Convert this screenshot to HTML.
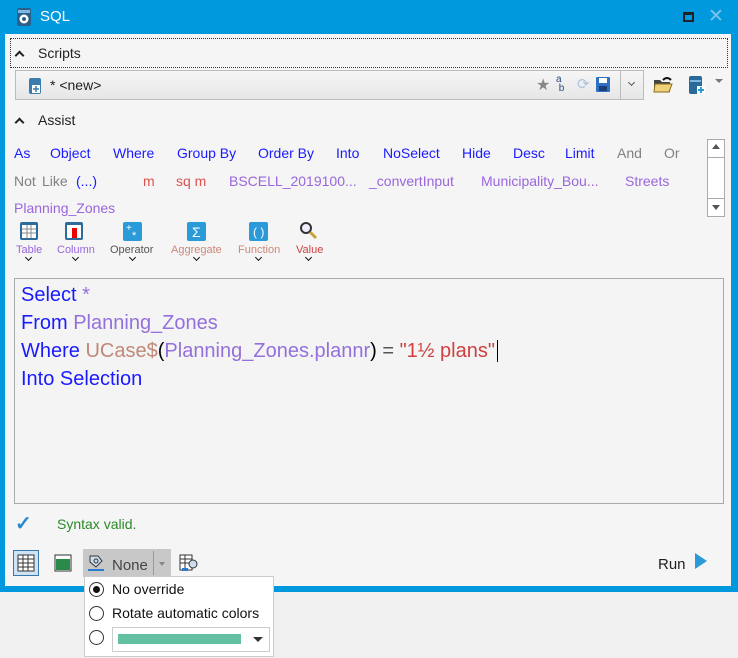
<!DOCTYPE html>
<html><head><meta charset="utf-8"><style>
*{margin:0;padding:0;box-sizing:border-box}
body{width:738px;height:658px;background:#f0f0f0;position:relative;overflow:hidden;font-family:"Liberation Sans",sans-serif;font-size:14px;color:#222}
.a{position:absolute;white-space:nowrap}
.b{color:#1a1aff}.g{color:#808080}.p{color:#9966dd}.r{color:#d9534f}
.lbl{font-size:11px;position:absolute;white-space:nowrap}
.chev{position:absolute;width:6px;height:6px;border-right:1.5px solid #111;border-bottom:1.5px solid #111;transform:rotate(45deg)}
.up{position:absolute;width:7px;height:7px;border-left:2px solid #222;border-top:2px solid #222;transform:rotate(45deg)}
</style></head><body>
<div class="a" style="left:0;top:0;width:738px;height:592px;background:#0099dd"></div>
<div class="a" style="left:5px;top:34px;width:726px;height:552px;background:#f5f5f5"></div>
<svg class="a" style="left:14px;top:7px" width="20" height="20" viewBox="0 0 20 20"><rect x="3" y="1" width="14" height="18" rx="2" fill="#2a5f8a"/><rect x="4" y="3" width="12" height="3" fill="#7fb6df"/><circle cx="10" cy="12" r="4.5" fill="#fff"/><circle cx="10" cy="12" r="2" fill="#2a5f8a"/></svg>
<div class="a" style="left:40px;top:8px;color:#fff;font-size:15px">SQL</div>
<div class="a" style="left:683px;top:12px;width:11px;height:10px;border:2px solid #222;border-top-width:3px"></div>
<div class="a" style="left:708px;top:5px;color:#7cc4ea;font-size:19px">✕</div>
<div class="a" style="left:10px;top:38px;width:718px;height:30px;border:1px dotted #333"></div>
<div class="up" style="left:16px;top:52px"></div>
<div class="a" style="left:38px;top:45px">Scripts</div>
<div class="a" style="left:15px;top:70px;width:629px;height:30px;border:1px solid #bbb;background:linear-gradient(#f6f6f6,#e6e6e6)"></div>
<div class="a" style="left:620px;top:71px;width:1px;height:28px;background:#bbb"></div>
<div class="chev" style="left:629px;top:80px;width:5px;height:5px;border-color:#555"></div>
<svg class="a" style="left:28px;top:78px" width="14" height="16"><rect x="1" y="0" width="12" height="16" rx="2" fill="#3a7cad"/><rect x="4" y="7" width="8" height="8" fill="#fff"/><path d="M8 8v6M5 11h6" stroke="#3a7cad" stroke-width="1.5"/></svg>
<div class="a" style="left:50px;top:77px">* &lt;new&gt;</div>
<div class="a" style="left:536px;top:75px;color:#888;font-size:16px">★</div>
<div class="a" style="left:556px;top:75px;font-size:10px;color:#2a4a7a;line-height:9px">a<br>&nbsp;b</div>
<div class="a" style="left:577px;top:75px;color:#aac4e0;font-size:15px">⟳</div>
<svg class="a" style="left:596px;top:77px" width="14" height="15"><rect width="14" height="15" rx="1" fill="#2f6fc4"/><rect x="3" y="1" width="8" height="5" fill="#fff"/><rect x="3" y="9" width="8" height="5" fill="#1b3f75"/></svg>
<svg class="a" style="left:653px;top:74px" width="20" height="20"><path d="M1 6h6l2 2h8v10H1z" fill="#444"/><path d="M2 10h17l-3 8H1z" fill="#f0d27a" stroke="#8a6b1a" stroke-width="1"/><path d="M10 6q4-4 8 0" stroke="#111" stroke-width="2" fill="none"/></svg>
<svg class="a" style="left:688px;top:75px" width="18" height="20"><rect x="1" y="1" width="13" height="18" rx="2" fill="#2a6a9a"/><rect x="2" y="5" width="11" height="2" fill="#7fb6df"/><rect x="9" y="11" width="8" height="8" fill="#fff"/><path d="M13 12v6M10 15h6" stroke="#2a9ad8" stroke-width="2"/></svg>
<div class="a" style="left:715px;top:79px;width:0;height:0;border:4px solid transparent;border-top:4px solid #777"></div>
<div class="up" style="left:16px;top:119px"></div>
<div class="a" style="left:38px;top:112px">Assist</div>
<div class="a b" style="left:14px;top:145px">As</div>
<div class="a b" style="left:50px;top:145px">Object</div>
<div class="a b" style="left:113px;top:145px">Where</div>
<div class="a b" style="left:177px;top:145px">Group By</div>
<div class="a b" style="left:258px;top:145px">Order By</div>
<div class="a b" style="left:336px;top:145px">Into</div>
<div class="a b" style="left:383px;top:145px">NoSelect</div>
<div class="a b" style="left:462px;top:145px">Hide</div>
<div class="a b" style="left:513px;top:145px">Desc</div>
<div class="a b" style="left:565px;top:145px">Limit</div>
<div class="a g" style="left:617px;top:145px">And</div>
<div class="a g" style="left:664px;top:145px">Or</div>
<div class="a g" style="left:14px;top:173px">Not</div>
<div class="a g" style="left:42px;top:173px">Like</div>
<div class="a b" style="left:76px;top:173px">(...)</div>
<div class="a r" style="left:143px;top:173px">m</div>
<div class="a r" style="left:176px;top:173px">sq m</div>
<div class="a p" style="left:229px;top:173px">BSCELL_2019100...</div>
<div class="a p" style="left:369px;top:173px">_convertInput</div>
<div class="a p" style="left:481px;top:173px">Municipality_Bou...</div>
<div class="a p" style="left:625px;top:173px">Streets</div>
<div class="a p" style="left:14px;top:200px">Planning_Zones</div>
<div class="a" style="left:707px;top:139px;width:18px;height:78px;border:1px solid #aaa;background:#fff"></div>
<div class="a" style="left:707px;top:157px;width:18px;height:1px;background:#aaa"></div>
<div class="a" style="left:707px;top:198px;width:18px;height:1px;background:#aaa"></div>
<div class="a" style="left:712px;top:144px;border:4px solid transparent;border-bottom:5px solid #555;border-top:0"></div>
<div class="a" style="left:712px;top:205px;border:4px solid transparent;border-top:5px solid #555;border-bottom:0"></div>
<svg class="a" style="left:20px;top:222px" width="18" height="18"><rect width="18" height="18" rx="2" fill="#2b6c9c"/><rect x="2" y="3" width="14" height="13" fill="#fff"/><path d="M2 7h14M2 11h14M7 3v13M11 3v13" stroke="#888"/></svg>
<div class="lbl p" style="left:16px;top:244px">Table</div>
<svg class="a" style="left:65px;top:222px" width="18" height="18"><rect width="18" height="18" rx="2" fill="#2b6c9c"/><rect x="2" y="3" width="14" height="13" fill="#fff"/><rect x="7" y="6" width="5" height="10" fill="#e00"/></svg>
<div class="lbl p" style="left:57px;top:244px">Column</div>
<svg class="a" style="left:123px;top:222px" width="19" height="19"><rect width="19" height="19" rx="2" fill="#2a9ad8"/><text x="3" y="9" fill="#fff" font-size="10" font-family="Liberation Sans">+</text><text x="9" y="17" fill="#fff" font-size="11" font-family="Liberation Sans">*</text></svg>
<div class="lbl" style="left:110px;top:244px;color:#555">Operator</div>
<svg class="a" style="left:187px;top:222px" width="19" height="19"><rect width="19" height="19" rx="2" fill="#2a9ad8"/><text x="5" y="15" fill="#fff" font-size="14" font-family="Liberation Sans">Σ</text></svg>
<div class="lbl" style="left:171px;top:244px;color:#cc8877">Aggregate</div>
<svg class="a" style="left:249px;top:222px" width="19" height="19"><rect width="19" height="19" rx="2" fill="#2a9ad8"/><text x="4" y="14" fill="#fff" font-size="12" font-family="Liberation Sans">( )</text></svg>
<div class="lbl" style="left:238px;top:244px;color:#cc8877">Function</div>
<svg class="a" style="left:299px;top:221px" width="19" height="19"><circle cx="7" cy="7" r="5" fill="#eef" stroke="#333" stroke-width="2"/><path d="M11 11l6 6" stroke="#c9a13a" stroke-width="3"/></svg>
<div class="lbl" style="left:296px;top:244px;color:#d04040">Value</div>
<div class="chev" style="left:26px;top:255px;width:5px;height:5px"></div>
<div class="chev" style="left:73px;top:255px;width:5px;height:5px"></div>
<div class="chev" style="left:130px;top:255px;width:5px;height:5px"></div>
<div class="chev" style="left:194px;top:255px;width:5px;height:5px"></div>
<div class="chev" style="left:256px;top:255px;width:5px;height:5px"></div>
<div class="chev" style="left:306px;top:255px;width:5px;height:5px"></div>
<div class="a" style="left:14px;top:278px;width:710px;height:226px;border:1px solid #aaa;background:#f4f4f4"></div>
<div class="a" style="left:21px;top:281px;font-size:20px;line-height:28px;color:#1a1aff;white-space:pre">Select <span style="color:#9370db">*</span>
From <span style="color:#9370db">Planning_Zones</span>
Where <span style="color:#c08878">UCase$</span><span style="color:#000">(</span><span style="color:#9370db">Planning_Zones.plannr</span><span style="color:#000">)</span><span style="color:#555"> = </span><span style="color:#d04040">"1½ plans"</span><span style="color:#000;border-left:1px solid #000;margin-left:2px"></span>
Into Selection</div>
<div class="a" style="left:15px;top:511px;color:#2a8ad0;font-size:20px;font-weight:bold">✓</div>
<div class="a" style="left:57px;top:516px;color:#2a8a2a;font-size:14px">Syntax valid.</div>
<div class="a" style="left:13px;top:550px;width:26px;height:26px;border:1px solid #3b77a8;background:#cfe3f5"></div>
<svg class="a" style="left:17px;top:554px" width="18" height="18"><rect x="1" y="1" width="16" height="16" fill="#fff" stroke="#333"/><path d="M1 5h16M1 9h16M1 13h16M6 1v16M11 1v16" stroke="#333"/></svg>
<svg class="a" style="left:54px;top:554px" width="18" height="18"><rect x="1" y="1" width="16" height="16" fill="#fff" stroke="#333"/><rect x="2" y="5" width="14" height="11" fill="#2a8a4a"/></svg>
<div class="a" style="left:83px;top:549px;width:88px;height:28px;background:#c8c8c8"></div>
<div class="a" style="left:153px;top:551px;width:1px;height:24px;background:#999"></div>
<div class="a" style="left:159px;top:562px;border:3px solid transparent;border-top:4px solid #888"></div>
<svg class="a" style="left:86px;top:553px" width="20" height="20"><path d="M4 3l8 0 4 5-6 6-6-5z" fill="#cde" stroke="#333"/><circle cx="10" cy="8" r="2" fill="none" stroke="#333"/><path d="M2 17h16" stroke="#2a7ad0" stroke-width="2"/></svg>
<div class="a" style="left:112px;top:557px;color:#444;font-size:15px">None</div>
<svg class="a" style="left:179px;top:553px" width="20" height="20"><rect x="1" y="2" width="12" height="15" fill="#fff" stroke="#333"/><path d="M1 6h12M1 10h12M6 2v15" stroke="#333"/><circle cx="14" cy="11" r="4" fill="#cde" stroke="#333"/><rect x="3" y="15" width="6" height="3" fill="#2a7ad0"/></svg>
<div class="a" style="left:658px;top:556px;font-size:15px">Run</div>
<div class="a" style="left:695px;top:553px;border:8px solid transparent;border-left:12px solid #2a9ad8;border-right:0;height:0"></div>
<div class="a" style="left:84px;top:576px;width:190px;height:81px;border:1px solid #ccc;background:#fff"></div>
<div class="a" style="left:89px;top:582px;width:15px;height:15px;border:1px solid #333;border-radius:50%;background:#fff"></div>
<div class="a" style="left:93px;top:586px;width:7px;height:7px;border-radius:50%;background:#111"></div>
<div class="a" style="left:112px;top:581px;color:#111">No override</div>
<div class="a" style="left:89px;top:606px;width:15px;height:15px;border:1px solid #333;border-radius:50%"></div>
<div class="a" style="left:112px;top:605px;color:#111">Rotate automatic colors</div>
<div class="a" style="left:89px;top:630px;width:15px;height:15px;border:1px solid #333;border-radius:50%"></div>
<div class="a" style="left:112px;top:627px;width:158px;height:25px;border:1px solid #ccc;background:#fff"></div>
<div class="a" style="left:118px;top:634px;width:123px;height:10px;background:#64c0a2"></div>
<div class="a" style="left:253px;top:637px;border:5px solid transparent;border-top:5px solid #333;border-bottom:0"></div>
</body></html>
